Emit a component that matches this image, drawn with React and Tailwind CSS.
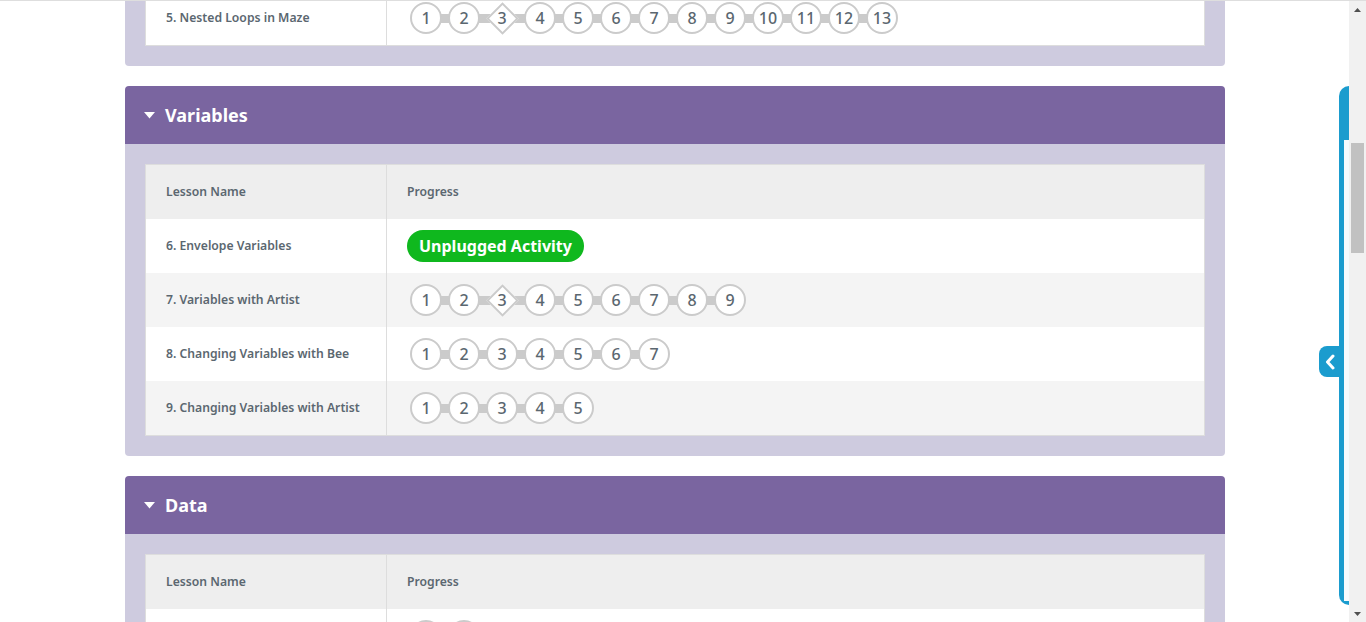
import React from "react";

const FONT = { fontFamily: '"Noto Sans", "Open Sans", Arial, sans-serif' };

const range = (n) => Array.from({ length: n }, (_, i) => i + 1);

const variables = [
  { name: "6. Envelope Variables", unplugged: true },
  { name: "7. Variables with Artist", levels: 9, diamond: 3 },
  { name: "8. Changing Variables with Bee", levels: 7 },
  { name: "9. Changing Variables with Artist", levels: 5 },
];

function Bubble({ n, diamond }) {
  if (diamond) {
    return (
      <div className="relative z-10 w-8 h-8 flex items-center justify-center">
        <div className="absolute w-[23px] h-[23px] rotate-45 bg-white border-2 border-[#cbcbcb]" />
        <span className="relative text-[16px] font-medium text-[#5b6770]">{n}</span>
      </div>
    );
  }
  return (
    <div className="relative z-10 w-8 h-8 rounded-full bg-white border-2 border-[#cbcbcb] flex items-center justify-center text-[16px] font-medium text-[#5b6770] leading-none">
      {n}
    </div>
  );
}

function Bubbles({ count, diamond }) {
  return (
    <div className="flex items-center pl-[3px]">
      {range(count).map((n) => (
        <React.Fragment key={n}>
          {n > 1 && <div className="w-[14px] h-[9px] -mx-1 bg-[#cbcbcb]" />}
          <Bubble n={n} diamond={n === diamond} />
        </React.Fragment>
      ))}
    </div>
  );
}

function Row({ row, shaded }) {
  return (
    <div className={`flex h-[54px] ${shaded ? "bg-[#f4f4f4]" : "bg-white"}`}>
      <div className="w-[241px] shrink-0 border-r border-[#dddddd] flex items-center pl-5 text-[12.2px] font-semibold text-[#5b6770]">
        {row.name}
      </div>
      <div className="flex-1 flex items-center pl-5">
        {row.unplugged ? (
          <div className="h-8 px-3 rounded-full bg-[#0fb81e] text-white text-[16px] font-bold flex items-center">
            Unplugged Activity
          </div>
        ) : (
          <Bubbles count={row.levels} diamond={row.diamond} />
        )}
      </div>
    </div>
  );
}

function TableHead() {
  return (
    <div className="flex h-[54px] bg-[#eeeeee] text-[12.2px] font-semibold text-[#5b6770]">
      <div className="w-[241px] shrink-0 border-r border-[#dddddd] flex items-center pl-5">Lesson Name</div>
      <div className="flex-1 flex items-center pl-5">Progress</div>
    </div>
  );
}

function Section({ title, children }) {
  return (
    <div className="mt-5">
      <div className="h-[58px] bg-[#7a65a0] rounded-t-[4px] flex items-center pl-[19px] text-white">
        <svg width="11" height="7" viewBox="0 0 11 7" className="mr-[10px]">
          <path d="M0 0 L11 0 L5.5 6.5 Z" fill="#ffffff" />
        </svg>
        <span className="text-[18px] font-bold">{title}</span>
      </div>
      <div className="bg-[#cecbdf] p-5 rounded-b-[4px]">
        <div className="border border-[#dddddd]">{children}</div>
      </div>
    </div>
  );
}

export default function App() {
  return (
    <div style={FONT} className="w-[1366px] h-[622px] overflow-hidden flex bg-white border-t border-[#dedede] relative">
      <div className="flex-1 relative overflow-hidden">
        <div className="w-[1100px] ml-[125px] -mt-[31px]">
          <div className="bg-[#cecbdf] p-5 rounded-b-[4px]">
            <div className="border border-[#dddddd]">
              <Row row={{ name: "5. Nested Loops in Maze", levels: 13, diamond: 3 }} />
            </div>
          </div>

          <Section title="Variables">
            <TableHead />
            {variables.map((r, i) => (
              <Row key={r.name} row={r} shaded={i % 2 === 1} />
            ))}
          </Section>

          <Section title="Data">
            <TableHead />
            <Row row={{ name: "10. Data with Maze", levels: 2 }} />
          </Section>
        </div>

        {/* collapsed side panel */}
        <div className="absolute left-[1339px] top-[85px] w-[10px] h-[519px] bg-[#1b9cce] rounded-l-[10px] flex flex-col">
          <div className="h-[54px] shrink-0" />
          <div className="flex-1 ml-[5px] mb-[4px] bg-[#f7fbfd]" />
        </div>
        <div className="absolute left-[1319px] top-[345px] w-[21px] h-[31px] bg-[#1b9cce] rounded-l-[8px] flex items-center justify-center">
          <svg width="10" height="16" viewBox="0 0 10 16">
            <path d="M8 2 L2.5 8 L8 14" stroke="#ffffff" strokeWidth="3" fill="none" strokeLinecap="round" strokeLinejoin="round" />
          </svg>
        </div>
      </div>

      {/* scrollbar */}
      <div className="w-[17px] shrink-0 bg-[#f1f1f1] flex flex-col">
        <div className="h-[17px] flex items-center justify-center">
          <svg width="7" height="4" viewBox="0 0 7 4">
            <path d="M0 4 L3.5 0 L7 4 Z" fill="#505050" />
          </svg>
        </div>
        <div className="flex-1 px-[2px]">
          <div className="mt-[125px] h-[110px] bg-[#c1c1c1]" />
        </div>
        <div className="h-[17px] flex items-center justify-center">
          <svg width="7" height="4" viewBox="0 0 7 4">
            <path d="M0 0 L3.5 4 L7 0 Z" fill="#505050" />
          </svg>
        </div>
      </div>
    </div>
  );
}
